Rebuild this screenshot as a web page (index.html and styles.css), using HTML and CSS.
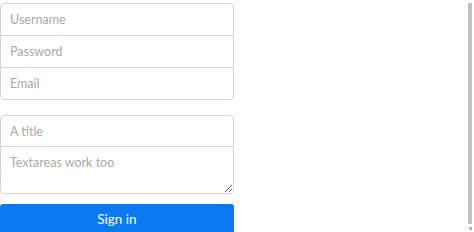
FILE: index.html
```html
<!DOCTYPE html>
<html>
<head>
<meta charset="utf-8">
<link rel="stylesheet" href="styles.css">
</head>
<body>
<form class="signin">
  <div class="group first">
    <input class="field" type="text" placeholder="Username">
    <input class="field" type="password" placeholder="Password">
    <input class="field" type="email" placeholder="Email">
  </div>
  <div class="group second">
    <input class="field title" type="text" placeholder="A title">
    <textarea class="field area" placeholder="Textareas work too"></textarea>
  </div>
  <button class="btn" type="button">Sign in</button>
</form>
<div class="scrollbar"><div class="thumb"></div><div class="arrow"></div></div>
</body>
</html>
```
FILE: styles.css
```css
html, body { overflow: hidden; }
body {
  margin: 0;
  background: #fff;
  font-family: "Lato", "Noto Sans", sans-serif;
}
.signin {
  width: 234px;
  padding-top: 3px;
  display: flex;
  flex-direction: column;
}
.group { display: flex; flex-direction: column; }
.second { margin-top: 15px; }
.field {
  box-sizing: border-box;
  width: 100%;
  height: 33px;
  margin: 0 0 -1px 0;
  padding: 0 9px;
  border: 1px solid #d6d6d6;
  background: #fff;
  font-family: inherit;
  font-size: 12.5px;
  color: #495057;
  outline: none;
  display: block;
}
.field::placeholder { color: #a9a9a9; }
.group .field:first-child { border-radius: 4px 4px 0 0; }
.group .field:last-child { border-radius: 0 0 4px 4px; margin-bottom: 0; }
.title { height: 32px; }
.area {
  height: 48px;
  padding-top: 7px;
  resize: vertical;
  line-height: 1.5;
}
.btn {
  width: 234px;
  height: 40px;
  margin-top: 10px;
  border: none;
  border-radius: 3px 3px 0 0;
  background: #0b7af0;
  color: #fff;
  font-family: inherit;
  font-size: 13.5px;
  padding: 0 0 10px 0;
}
.scrollbar {
  position: fixed;
  top: 3px;
  right: 2px;
  bottom: 2px;
  width: 4px;
  display: flex;
  flex-direction: column;
  align-items: center;
  gap: 3px;
}
.thumb { flex: 1; width: 4px; background: #c1c1c1; }
.arrow { width: 3px; height: 3px; background: #b0b0b0; }
```
